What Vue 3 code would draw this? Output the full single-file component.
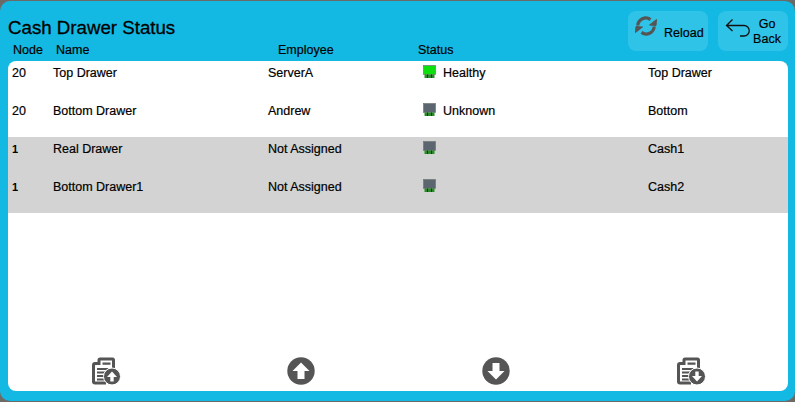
<script setup>
const rows = [
  { node: '20', name: 'Top Drawer', employee: 'ServerA', led: '#0ee00e', status: 'Healthy', extra: 'Top Drawer', alt: false },
  { node: '20', name: 'Bottom Drawer', employee: 'Andrew', led: '#5b6670', status: 'Unknown', extra: 'Bottom', alt: false },
  { node: '1', name: 'Real Drawer', employee: 'Not Assigned', led: '#5b6670', status: '', extra: 'Cash1', alt: true },
  { node: '1', name: 'Bottom Drawer1', employee: 'Not Assigned', led: '#5b6670', status: '', extra: 'Cash2', alt: true },
]
</script>

<template>
  <div class="screen">
    <div class="panel">
      <header class="top">
        <div class="heads">
          <h1 class="title">Cash Drawer Status</h1>
          <div class="cols">
            <span>Node</span><span>Name</span><span>Employee</span><span>Status</span>
          </div>
        </div>
        <div class="actions">
          <button class="btn reload">
            <svg width="22" height="20" viewBox="0 0 22 20" class="ic">
              <path d="M2.800 9.500A8 8 0 0 1 15.500 3.600" fill="none" stroke="#555" stroke-width="3.200"/>
              <path d="M21.500 3.500 21 9.500 14.500 9Z" fill="#555" stroke="#555" stroke-linejoin="round"/>
              <path d="M19.200 10.500A8 8 0 0 1 6.500 16.400" fill="none" stroke="#555" stroke-width="3.200"/>
              <path d="M.5 16.500 1 10.500 7.500 11Z" fill="#555" stroke="#555" stroke-linejoin="round"/>
            </svg>
            <span>Reload</span>
          </button>
          <button class="btn back">
            <svg width="26" height="19" viewBox="0 0 26 19" class="ic">
              <path d="M7.500 .500 1.500 6.500 7.500 12M1.500 6.500H19A5 5 0 0 1 19 17H15" fill="none" stroke="#111" stroke-width="1.300"/>
            </svg>
            <span class="two">Go<br>Back</span>
          </button>
        </div>
      </header>

      <main class="sheet">
        <div v-for="r in rows" :key="r.name" class="row" :class="{ alt: r.alt }">
          <span class="node" :class="{ small: r.node === '1' }">{{ r.node }}</span>
          <span>{{ r.name }}</span>
          <span>{{ r.employee }}</span>
          <span class="status">
            <svg width="13" height="13" viewBox="0 0 13 13" class="led">
              <rect x="0.500" y="0.500" width="12" height="9" :fill="r.led" stroke="#6f7a70" stroke-width="0.700"/>
              <rect x="1.500" y="9.500" width="10" height="3.500" fill="#2c8a2c"/>
              <path d="M4.500 9.500V13M8.500 9.500V13" stroke="#123c12" stroke-width="1"/>
            </svg>
            <span>{{ r.status }}</span>
          </span>
          <span>{{ r.extra }}</span>
        </div>

        <footer class="tools">
          <div class="tool">
            <svg width="29" height="28" viewBox="0 0 29 28" class="clip">
              <path d="M3 5h2.500V3A2.500 2.500 0 0 1 8 .5h12.500A2.500 2.500 0 0 1 23 3V16H14V27.500H3A3 3 0 0 1 0 24.500V8A3 3 0 0 1 3 5Z" fill="#555"/>
              <path d="M8.500 3.500H20V15H13V24.500H3.500A.5.500 0 0 1 3 24V8.500A.5.500 0 0 1 3.500 8H8.500Z" fill="#fff"/>
              <path d="M10.500 5.500h8v2.200h-8zM5 11h11v2h-11zM5 14.500h10v2h-10zM5 18h8v2h-8zM5 21.500h8v2h-8z" fill="#555"/>
              <circle cx="20" cy="19.500" r="8.500" fill="#555" stroke="#fff" stroke-width="1"/>
              <path d="M20 14.500 25 20h-3.300v4.500h-3.400V20H15Z" fill="#fff"/>
            </svg>
          </div>
          <div class="tool">
            <svg width="28" height="28" viewBox="0 0 28 28">
              <circle cx="14" cy="14" r="13.700" fill="#555"/>
              <path d="M14 5.500 22.500 14H17.500v8h-7v-8H5.500Z" fill="#fff"/>
            </svg>
          </div>
          <div class="tool">
            <svg width="28" height="28" viewBox="0 0 28 28">
              <circle cx="14" cy="14" r="13.700" fill="#555"/>
              <path d="M14 22.500 22.500 14H17.500V6h-7v8H5.500Z" fill="#fff"/>
            </svg>
          </div>
          <div class="tool">
            <svg width="29" height="28" viewBox="0 0 29 28" class="clip">
              <path d="M3 5h2.500V3A2.500 2.500 0 0 1 8 .5h12.500A2.500 2.500 0 0 1 23 3V16H14V27.500H3A3 3 0 0 1 0 24.500V8A3 3 0 0 1 3 5Z" fill="#555"/>
              <path d="M8.500 3.500H20V15H13V24.500H3.500A.5.500 0 0 1 3 24V8.500A.5.500 0 0 1 3.500 8H8.500Z" fill="#fff"/>
              <path d="M10.500 5.500h8v2.200h-8zM5 11h11v2h-11zM5 14.500h10v2h-10zM5 18h8v2h-8zM5 21.500h8v2h-8z" fill="#555"/>
              <circle cx="20" cy="19.500" r="8.500" fill="#555" stroke="#fff" stroke-width="1"/>
              <path d="M20 24.500 25 19h-3.300v-4.500h-3.400V19H15Z" fill="#fff"/>
            </svg>
          </div>
        </footer>
      </main>
    </div>
  </div>
</template>

<style>
html, body { margin: 0; background: #6b6a66; }
</style>

<style scoped>
.screen {
  width: 795px;
  height: 402px;
  box-sizing: border-box;
  padding: 1px 0 1px;
  overflow: hidden;
  font-family: "Liberation Sans", Arial, sans-serif;
  font-size: 12.500px;
  color: #000;
  -webkit-text-stroke: 0.2px #000;
}
.panel {
  height: 100%;
  box-sizing: border-box;
  background: #13b9e3;
  border-radius: 10px;
  padding: 1px 7px 10px 8px;
  display: flex;
  flex-direction: column;
}
.top {
  height: 59px;
  display: flex;
  justify-content: space-between;
  flex: none;
}
.heads { display: flex; flex-direction: column; }
.title {
  margin: 15px 0 0;
  font-size: 18.700px;
  line-height: 22px;
  font-weight: 400;
  -webkit-text-stroke: 0.3px #000;
}
.cols {
  margin-top: 3px;
  padding-left: 5px;
  display: grid;
  grid-template-columns: 43px 222px 140px 60px;
  line-height: 16px;
}
.actions { display: flex; gap: 10px; margin-top: 9px; }
.btn {
  height: 40px;
  border: 0;
  padding: 0;
  border-radius: 8px;
  background: #30c3e8;
  font: inherit;
  color: inherit;
  -webkit-text-stroke: inherit;
  display: flex;
  align-items: center;
}
.reload { width: 80px; padding-left: 7px; gap: 7px; }
.reload .ic { margin-top: -10px; }
.reload span { margin-top: 4px; }
.back { width: 70px; padding-left: 7px; align-items: flex-start; }
.back .ic { margin-top: 8px; flex: none; }
.two { width: 32px; text-align: center; line-height: 15px; margin-top: 6px; }
.sheet {
  flex: 1;
  min-height: 0;
  background: #fff;
  border-radius: 8px;
  overflow: hidden;
  display: flex;
  flex-direction: column;
}
.row {
  height: 38px;
  flex: none;
  box-sizing: border-box;
  padding: 5px 0 0 4px;
  display: grid;
  grid-template-columns: 41px 215px 155px 225px 120px;
  line-height: 15px;
}
.row.alt { background: #d3d3d3; }
.small { font-size: 11px; font-weight: 700; -webkit-text-stroke: 0; }
.status { display: flex; gap: 7px; align-items: flex-start; }
.led { margin-top: -1px; flex: none; }
.tools {
  margin-top: auto;
  display: grid;
  grid-template-columns: repeat(4, 1fr);
  height: 34px;
}
.tool { display: flex; justify-content: center; }
.clip { position: relative; left: 1px; }
</style>
